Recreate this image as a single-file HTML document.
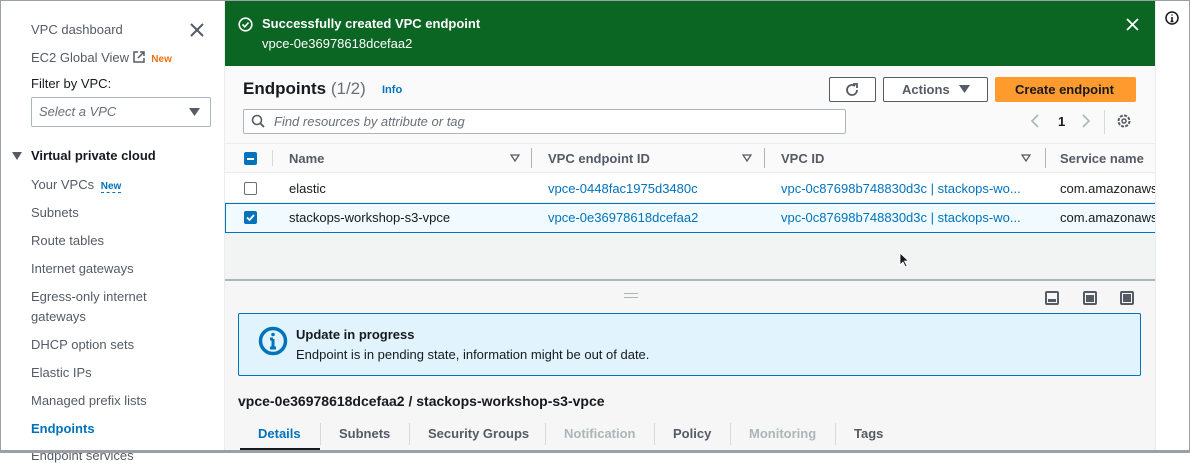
<!DOCTYPE html>
<html><head><meta charset="utf-8"><style>
*{margin:0;padding:0;box-sizing:border-box}
body{width:1190px;height:453px;overflow:hidden;background:#fff;font-family:"Liberation Sans",sans-serif;font-size:13px;color:#16191f;position:relative}
.a{position:absolute;white-space:nowrap}
.nav{color:#545b64}
.lnk{color:#0073bb}
.b{font-weight:bold}
.cb{position:absolute;width:13px;height:13px;border:1px solid #687078;border-radius:2px;background:#fff}
.cbon{background:#0073bb;border-color:#0073bb}
.sep{position:absolute;width:1px;background:#d5dbdb}
</style></head><body>
<!-- frame -->
<div class="a" style="left:0;top:0;width:1190px;height:453px;border:1px solid #9aa0a6;border-bottom:3px solid #9aa0a6;z-index:50;pointer-events:none"></div>
<!-- sidebar -->
<div class="a" style="left:0;top:0;width:225px;height:453px;background:#fff;border-right:1px solid #eaeded"></div>
<div class="a nav" style="left:31px;top:22px">VPC dashboard</div>
<svg class="a" style="left:190px;top:23px" width="14" height="14"><path d="M1 1L13 13M13 1L1 13" stroke="#545b64" stroke-width="2"/></svg>
<div class="a nav" style="left:31px;top:50px">EC2 Global View <svg width="12" height="12" style="vertical-align:-1px"><path d="M5 1H1V11H11V7M7 1H11V5M11 1L5 7" stroke="#545b64" stroke-width="1.5" fill="none"/></svg> <span style="color:#ec7211;font-size:10px;font-weight:bold;margin-left:3px">New</span></div>
<div class="a" style="left:31px;top:76px;color:#16191f">Filter by VPC:</div>
<div class="a" style="left:31px;top:97px;width:180px;height:30px;border:1px solid #aab7b8;border-radius:2px"></div>
<div class="a" style="left:39px;top:104px;color:#687078;font-style:italic">Select a VPC</div>
<svg class="a" style="left:189px;top:108px" width="11" height="8"><path d="M0 0H11L5.5 8Z" fill="#545b64"/></svg>
<svg class="a" style="left:12px;top:152px" width="10" height="8"><path d="M0 0H10L5 8Z" fill="#545b64"/></svg>
<div class="a b" style="left:31px;top:148px">Virtual private cloud</div>
<div class="a nav" style="left:31px;top:177px">Your VPCs <span style="color:#0073bb;font-size:10px;font-weight:bold;border-bottom:1px dashed #0073bb;margin-left:3px">New</span></div>
<div class="a nav" style="left:31px;top:205px">Subnets</div>
<div class="a nav" style="left:31px;top:233px">Route tables</div>
<div class="a nav" style="left:31px;top:261px">Internet gateways</div>
<div class="a nav" style="left:31px;top:289px">Egress-only internet</div>
<div class="a nav" style="left:31px;top:309px">gateways</div>
<div class="a nav" style="left:31px;top:337px">DHCP option sets</div>
<div class="a nav" style="left:31px;top:365px">Elastic IPs</div>
<div class="a nav" style="left:31px;top:393px">Managed prefix lists</div>
<div class="a b lnk" style="left:31px;top:421px">Endpoints</div>
<div class="a nav" style="left:31px;top:448px">Endpoint services</div>
<!-- main bg -->
<div class="a" style="left:225px;top:0;width:930px;height:453px;background:#f2f3f3"></div>
<!-- right rail -->
<div class="a" style="left:1155px;top:0;width:35px;height:453px;background:#fff;border-left:1px solid #eaeded"></div>
<svg class="a" style="left:1165px;top:11px" width="14" height="14"><circle cx="7" cy="7" r="6" stroke="#16191f" stroke-width="1.5" fill="none"/><path d="M7 6V10.5M5.5 10.5H8.5M7 3.5V4.5" stroke="#16191f" stroke-width="1.6"/></svg>
<!-- green flash -->
<div class="a" style="left:225px;top:0;width:930px;height:66px;background:#0b6623"></div>
<svg class="a" style="left:238px;top:17px" width="15" height="15"><circle cx="7.5" cy="7.5" r="6.3" stroke="#fff" stroke-width="1.6" fill="none"/><path d="M4.5 7.5L6.8 9.8L10.5 5.5" stroke="#fff" stroke-width="1.6" fill="none"/></svg>
<div class="a b" style="left:262px;top:16px;color:#fff">Successfully created VPC endpoint</div>
<div class="a" style="left:262px;top:36px;color:#fff">vpce-0e36978618dcefaa2</div>
<svg class="a" style="left:1126px;top:18px" width="13" height="13"><path d="M1 1L12 12M12 1L1 12" stroke="#fff" stroke-width="1.8"/></svg>
<!-- header panel -->
<div class="a" style="left:225px;top:66px;width:930px;height:77px;background:#fafafa"></div>
<div class="a" style="left:243px;top:79px;font-size:17px;font-weight:bold">Endpoints <span style="font-weight:normal;color:#687078">(1/2)</span></div>
<div class="a b lnk" style="left:382px;top:84px;font-size:11px">Info</div>
<div class="a" style="left:829px;top:77px;width:47px;height:25px;border:1px solid #545b64;border-radius:2px;background:#fff"></div>
<svg class="a" style="left:844px;top:82px" width="16" height="16"><path d="M13 8A5 5 0 1 1 11 4" stroke="#545b64" stroke-width="1.8" fill="none"/><path d="M9 2H13V6" stroke="#545b64" stroke-width="1.8" fill="none"/></svg>
<div class="a" style="left:883px;top:77px;width:105px;height:25px;border:1px solid #545b64;border-radius:2px;background:#fff"></div>
<div class="a b" style="left:902px;top:82px;color:#545b64">Actions</div>
<svg class="a" style="left:959px;top:85px" width="11" height="8"><path d="M0 0H11L5.5 8Z" fill="#545b64"/></svg>
<div class="a" style="left:995px;top:77px;width:141px;height:25px;background:#ff9a2e;border-radius:2px"></div>
<div class="a b" style="left:1015px;top:82px;color:#16191f">Create endpoint</div>
<div class="a" style="left:243px;top:109px;width:603px;height:25px;border:1px solid #aab7b8;border-radius:2px;background:#fff"></div>
<svg class="a" style="left:251px;top:114px" width="14" height="14"><circle cx="6" cy="6" r="4.5" stroke="#545b64" stroke-width="1.6" fill="none"/><path d="M9.5 9.5L13 13" stroke="#545b64" stroke-width="1.8"/></svg>
<div class="a" style="left:274px;top:114px;color:#687078;font-style:italic">Find resources by attribute or tag</div>
<svg class="a" style="left:1030px;top:114px" width="10" height="14"><path d="M8 1L2 7L8 13" stroke="#aab7b8" stroke-width="1.6" fill="none"/></svg>
<div class="a b" style="left:1058px;top:114px">1</div>
<svg class="a" style="left:1081px;top:114px" width="10" height="14"><path d="M2 1L8 7L2 13" stroke="#aab7b8" stroke-width="1.6" fill="none"/></svg>
<div class="sep" style="left:1104px;top:110px;height:24px"></div>
<svg class="a" style="left:1116px;top:113px" width="16" height="16"><circle cx="8" cy="8" r="5.5" stroke="#545b64" stroke-width="2" fill="none" stroke-dasharray="3 1.3"/><circle cx="8" cy="8" r="2" stroke="#545b64" stroke-width="1.5" fill="none"/></svg>
<!-- table -->
<div class="a" style="left:225px;top:143px;width:930px;height:30px;background:#fafafa;border-top:1px solid #eaeded;border-bottom:1px solid #eaeded"></div>
<div class="cb cbon" style="left:244px;top:152px"></div><div class="a" style="left:247px;top:158px;width:7px;height:2px;background:#fff"></div>
<div class="sep" style="left:272px;top:150px;height:16px"></div>
<div class="a b" style="left:289px;top:151px;color:#545b64">Name</div>
<svg class="a" style="left:510px;top:154px" width="10" height="8"><path d="M1 1H9L5 7Z" stroke="#545b64" stroke-width="1.3" fill="none"/></svg>
<div class="sep" style="left:531px;top:148px;height:20px;background:#aab7b8"></div>
<div class="a b" style="left:548px;top:151px;color:#545b64">VPC endpoint ID</div>
<svg class="a" style="left:742px;top:154px" width="10" height="8"><path d="M1 1H9L5 7Z" stroke="#545b64" stroke-width="1.3" fill="none"/></svg>
<div class="sep" style="left:764px;top:148px;height:20px;background:#aab7b8"></div>
<div class="a b" style="left:781px;top:151px;color:#545b64">VPC ID</div>
<svg class="a" style="left:1021px;top:154px" width="10" height="8"><path d="M1 1H9L5 7Z" stroke="#545b64" stroke-width="1.3" fill="none"/></svg>
<div class="sep" style="left:1045px;top:148px;height:20px;background:#aab7b8"></div>
<div class="a b" style="left:1060px;top:151px;color:#545b64">Service name</div>

<div class="a" style="left:225px;top:173px;width:930px;height:30px;background:#fff;border-bottom:1px solid #eaeded"></div>
<div class="cb" style="left:244px;top:182px"></div>
<div class="a" style="left:289px;top:181px">elastic</div>
<div class="a lnk" style="left:548px;top:181px">vpce-0448fac1975d3480c</div>
<div class="a lnk" style="left:781px;top:181px">vpc-0c87698b748830d3c | stackops-wo...</div>
<div class="a" style="left:1060px;top:181px;width:95px;overflow:hidden">com.amazonaws</div>

<div class="a" style="left:225px;top:203px;width:930px;height:30px;background:#f1faff;border:1px solid #0073bb;border-right:none"></div>
<div class="cb cbon" style="left:244px;top:211px"></div>
<svg class="a" style="left:245px;top:212px" width="11" height="11"><path d="M2 5.5L4.5 8L9 3" stroke="#fff" stroke-width="1.8" fill="none"/></svg>
<div class="a" style="left:289px;top:210px">stackops-workshop-s3-vpce</div>
<div class="a lnk" style="left:548px;top:210px">vpce-0e36978618dcefaa2</div>
<div class="a lnk" style="left:781px;top:210px">vpc-0c87698b748830d3c | stackops-wo...</div>
<div class="a" style="left:1060px;top:210px;width:95px;overflow:hidden">com.amazonaws</div>

<!-- cursor -->
<svg class="a" style="left:899px;top:252px" width="10" height="16"><path d="M1 1V13L4 10L6.5 15L8 14L5.5 9H9.5Z" fill="#16191f" stroke="#fff" stroke-width="0.8"/></svg>
<!-- split panel -->
<div class="a" style="left:225px;top:279px;width:930px;height:2px;background:#aab7b8"></div>
<div class="a" style="left:225px;top:281px;width:930px;height:172px;background:#f6f6f6"></div>
<div class="a" style="left:624px;top:293px;width:14px;height:1px;background:#aab7b8"></div>
<div class="a" style="left:624px;top:297px;width:14px;height:1px;background:#aab7b8"></div>
<div class="a" style="left:1045px;top:291px;width:14px;height:14px;border:2px solid #545b64;border-radius:2px"></div><div class="a" style="left:1048px;top:299px;width:8px;height:3px;background:#545b64"></div>
<div class="a" style="left:1083px;top:291px;width:14px;height:14px;border:2px solid #545b64;border-radius:2px"></div><div class="a" style="left:1086px;top:295px;width:8px;height:7px;background:#545b64"></div>
<div class="a" style="left:1120px;top:291px;width:14px;height:14px;border:2px solid #545b64;border-radius:2px"></div><div class="a" style="left:1123px;top:294px;width:8px;height:8px;background:#545b64"></div>
<!-- info alert -->
<div class="a" style="left:238px;top:313px;width:903px;height:63px;background:#e1f4fd;border:1px solid #0073bb;border-radius:2px"></div>
<svg class="a" style="left:258px;top:326px" width="30" height="30"><circle cx="15" cy="15" r="12.5" stroke="#0073bb" stroke-width="3.5" fill="none"/><path d="M15 13V22M12 22H18M12 13H15" stroke="#0073bb" stroke-width="3"/><circle cx="15" cy="8.5" r="1.8" fill="#0073bb"/></svg>
<div class="a b" style="left:296px;top:327px">Update in progress</div>
<div class="a" style="left:296px;top:347px">Endpoint is in pending state, information might be out of date.</div>
<div class="a b" style="left:238px;top:393px;font-size:14px">vpce-0e36978618dcefaa2 / stackops-workshop-s3-vpce</div>
<!-- tabs -->
<div class="a b lnk" style="left:258px;top:426px">Details</div>
<div class="a" style="left:240px;top:448px;width:80px;height:3px;background:#16191f"></div>
<div class="sep" style="left:320px;top:423px;height:22px"></div>
<div class="a b" style="left:339px;top:426px;color:#545b64">Subnets</div>
<div class="sep" style="left:409px;top:423px;height:22px"></div>
<div class="a b" style="left:428px;top:426px;color:#545b64">Security Groups</div>
<div class="sep" style="left:545px;top:423px;height:22px"></div>
<div class="a b" style="left:564px;top:426px;color:#aab7b8">Notification</div>
<div class="sep" style="left:654px;top:423px;height:22px"></div>
<div class="a b" style="left:673px;top:426px;color:#545b64">Policy</div>
<div class="sep" style="left:730px;top:423px;height:22px"></div>
<div class="a b" style="left:749px;top:426px;color:#aab7b8">Monitoring</div>
<div class="sep" style="left:835px;top:423px;height:22px"></div>
<div class="a b" style="left:854px;top:426px;color:#545b64">Tags</div>
</body></html>
